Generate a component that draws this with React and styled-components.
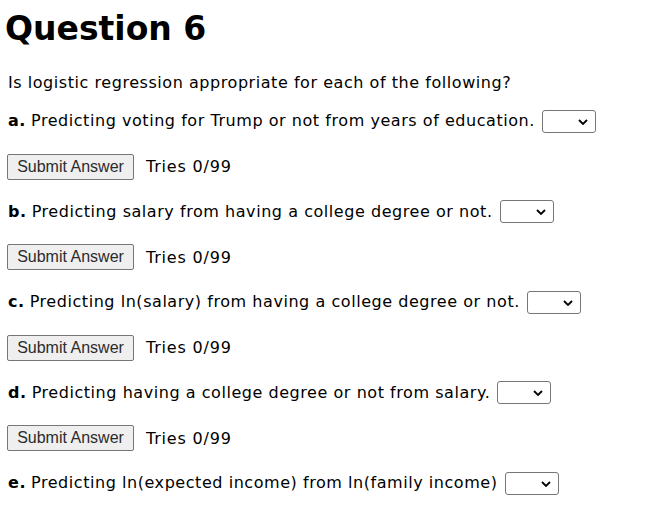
import React from "react";
import styled, { createGlobalStyle } from "styled-components";

const Global = createGlobalStyle`
  html, body { margin: 0; padding: 0; background: #fff; }
  body { font-family: "DejaVu Sans", Verdana, sans-serif; color: #000; }
`;

const Page = styled.div`
  display: flex;
  flex-direction: column;
  padding: 7px 8px 0 8px;
`;

const Title = styled.h1`
  margin: 0 0 0 -3px;
  font-family: "DejaVu Sans", Verdana, sans-serif;
  font-weight: bold;
  font-size: 33px;
  line-height: 44px;
`;

const Intro = styled.p`
  margin: 20px 0 14px 0;
  font-size: 16px;
  line-height: 24px;
  letter-spacing: 0.55px;
`;

const QuestionLine = styled.div`
  display: flex;
  align-items: center;
  height: 24px;
  font-size: 16px;
  line-height: 24px;
  letter-spacing: 0.55px;
  white-space: nowrap;
  margin-bottom: 20.5px;
`;

const Letter = styled.b`
  font-weight: bold;
  margin-right: 5px;
`;

const SelectWrap = styled.span`
  position: relative;
  display: inline-flex;
  margin-left: 7px;
`;

const Select = styled.select`
  appearance: none;
  -webkit-appearance: none;
  width: 54px;
  height: 23px;
  border: 1px solid #767676;
  border-radius: 3px;
  background: #fff;
  margin: 0;
`;

const Chevron = styled.svg`
  position: absolute;
  right: 8px;
  top: 9px;
  pointer-events: none;
`;

const ButtonRow = styled.div`
  display: flex;
  align-items: center;
  height: 26px;
  margin-bottom: 20px;
`;

const SubmitButton = styled.button`
  box-sizing: border-box;
  width: 127px;
  height: 26px;
  margin-left: -1px;
  padding: 0;
  font-family: "Liberation Sans", Arial, sans-serif;
  font-size: 16px;
  color: #2b2b2b;
  background: #efefef;
  border: 1px solid #767676;
  border-radius: 2px;
`;

const Tries = styled.span`
  margin-left: 12px;
  font-family: "DejaVu Sans", Verdana, sans-serif;
  font-size: 16px;
  letter-spacing: 0.8px;
`;

const questions = [
  { letter: "a.", text: "Predicting voting for Trump or not from years of education." },
  { letter: "b.", text: "Predicting salary from having a college degree or not." },
  { letter: "c.", text: "Predicting ln(salary) from having a college degree or not." },
  { letter: "d.", text: "Predicting having a college degree or not from salary." },
  { letter: "e.", text: "Predicting ln(expected income) from ln(family income)" },
];

function Dropdown() {
  return (
    <SelectWrap>
      <Select defaultValue="">
        <option value=""></option>
        <option value="yes">Yes</option>
        <option value="no">No</option>
      </Select>
      <Chevron width="10" height="6" viewBox="0 0 10 6">
        <path d="M1 1 L5 5 L9 1" fill="none" stroke="#000" strokeWidth="1.8" />
      </Chevron>
    </SelectWrap>
  );
}

export default function App() {
  return (
    <>
      <Global />
      <Page>
        <Title>Question 6</Title>
        <Intro>Is logistic regression appropriate for each of the following?</Intro>
        {questions.map((q, i) => (
          <React.Fragment key={q.letter}>
            <QuestionLine>
              <Letter>{q.letter}</Letter>
              {q.text}
              <Dropdown />
            </QuestionLine>
            {i < questions.length - 1 && (
              <ButtonRow>
                <SubmitButton type="button">Submit Answer</SubmitButton>
                <Tries>Tries 0/99</Tries>
              </ButtonRow>
            )}
          </React.Fragment>
        ))}
      </Page>
    </>
  );
}
